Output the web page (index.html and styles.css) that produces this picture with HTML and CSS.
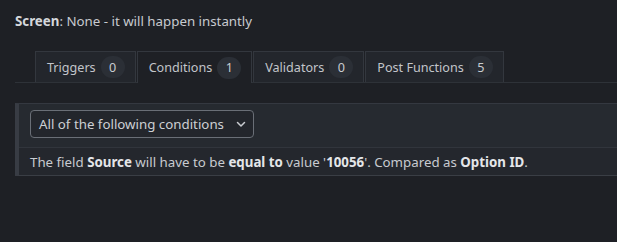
FILE: index.html
```html
<!DOCTYPE html>
<html>
<head>
<meta charset="utf-8">
<link rel="stylesheet" href="styles.css">
</head>
<body>
<div class="page">
  <p class="screen"><b>Screen</b>: None - it will happen instantly</p>
  <div class="tabs">
    <div class="tab">Triggers <span class="badge">0</span></div>
    <div class="tab active">Conditions <span class="badge">1</span></div>
    <div class="tab">Validators <span class="badge">0</span></div>
    <div class="tab">Post Functions <span class="badge">5</span></div>
  </div>
  <div class="panel">
    <div class="panel-head">
      <div class="select">
        <span>All of the following conditions</span>
        <svg class="chev" width="12" height="12" viewBox="0 0 12 12"><path d="M2.5 4.5 L6 8 L9.5 4.5" fill="none" stroke="#c9ccd1" stroke-width="1.5" stroke-linecap="round" stroke-linejoin="round"/></svg>
      </div>
    </div>
    <div class="panel-body">The field <b>Source</b> will have to be <b>equal to</b> value '<b>10056</b>'. Compared as <b>Option ID</b>.</div>
  </div>
</div>
</body>
</html>
```
FILE: styles.css
```css
html, body {
  margin: 0;
  padding: 0;
  background: #1e2025;
}
* {
  box-sizing: border-box;
}
body {
  font-family: "Noto Sans", "Open Sans", sans-serif;
  font-size: 13.3px;
  color: #c8cbd0;
}
.page {
  padding: 10px 0 0 15px;
}
.screen {
  margin: 0;
  line-height: 22px;
}
.screen b {
  color: #d4d7db;
}
b {
  font-weight: 700;
  color: #e4e6e9;
}
.tabs {
  display: flex;
  margin-top: 19px;
  padding-left: 20px;
  border-bottom: 1px solid #2e3238;
}
.tab {
  display: flex;
  align-items: center;
  gap: 5px;
  height: 31px;
  padding: 0 10px 0 11px;
  background: #23262c;
  border: 1px solid #33373e;
  border-bottom: none;
  margin-bottom: -1px;
  margin-right: 1px;
  color: #c2c5ca;
  font-size: 12.6px;
  white-space: nowrap;
}
.tab.active {
  background: #1e2025;
  height: 32px;
}
.badge {
  display: inline-flex;
  align-items: center;
  justify-content: center;
  min-width: 24px;
  height: 22px;
  border-radius: 11px;
  background: #2b2f36;
  font-size: 12.6px;
  color: #c9ccd1;
}
.panel {
  margin-top: 20px;
  border-left: 4px solid #383c44;
  border-top: 1px solid #343840;
  border-bottom: 1px solid #3a3e45;
  background: #262a30;
}
.panel-head {
  padding: 6px 11px 9px;
  border-bottom: 1px solid #31353c;
}
.select {
  display: flex;
  align-items: center;
  justify-content: space-between;
  width: 224px;
  height: 28px;
  padding: 0 6px 0 8px;
  border: 1px solid #6a6f77;
  border-radius: 4px;
  background: #23262c;
  color: #cdd0d4;
  white-space: nowrap;
}
.panel-body {
  padding: 6px 11px 5px;
  line-height: 16px;
  background: #24272d;
  color: #c8cbd0;
  white-space: nowrap;
}
```
